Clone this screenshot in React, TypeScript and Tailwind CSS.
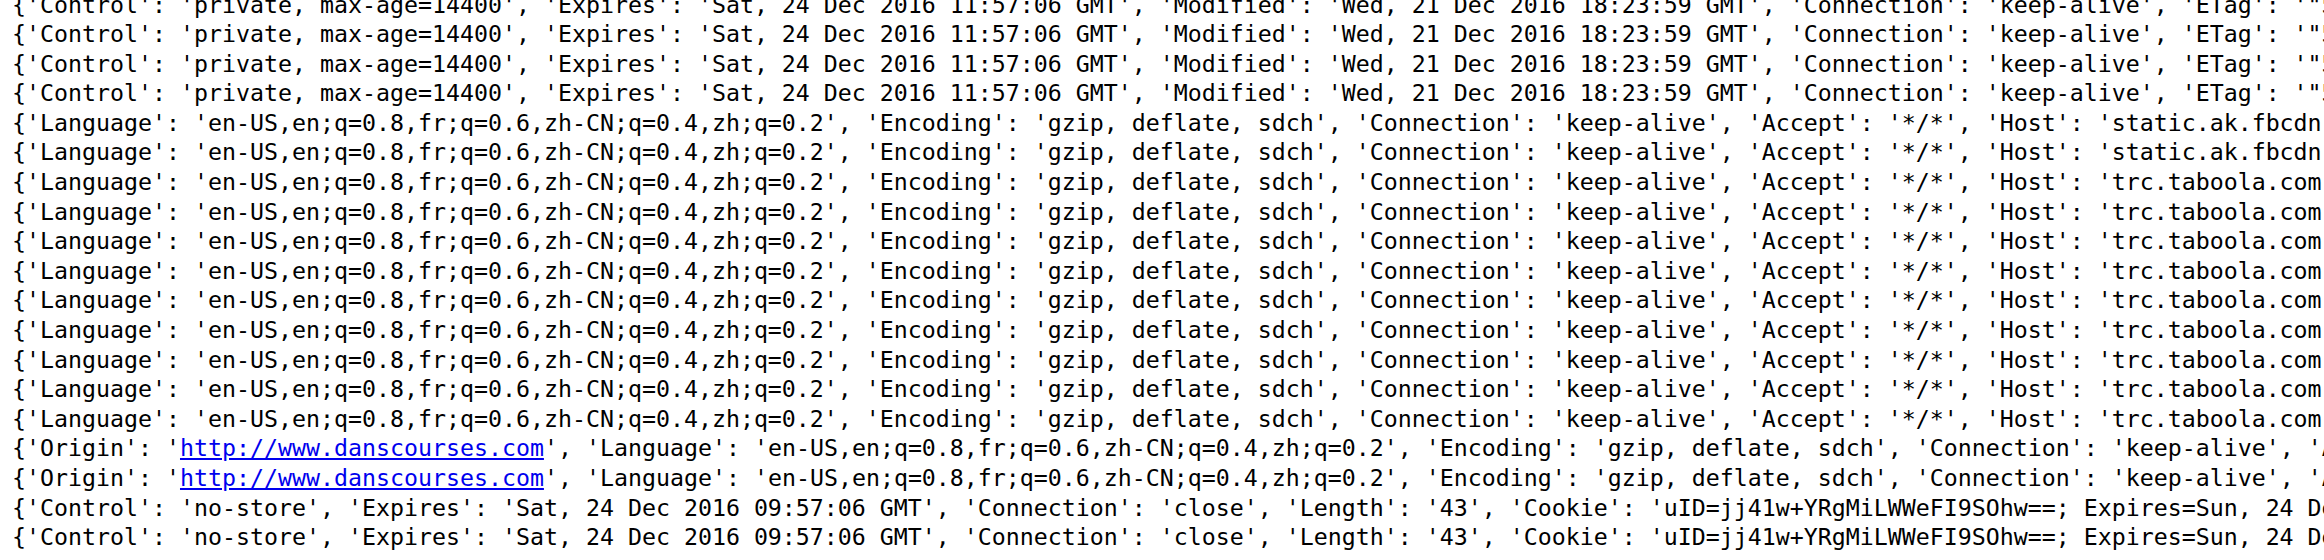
import React from "react";

const control =
  "{'Control': 'private, max-age=14400', 'Expires': 'Sat, 24 Dec 2016 11:57:06 GMT', 'Modified': 'Wed, 21 Dec 2016 18:23:59 GMT', 'Connection': 'keep-alive', 'ETag': '\"585ac8b7-2f4a\"', 'Server': 'nginx'}";
const lang = (host: string) =>
  `{'Language': 'en-US,en;q=0.8,fr;q=0.6,zh-CN;q=0.4,zh;q=0.2', 'Encoding': 'gzip, deflate, sdch', 'Connection': 'keep-alive', 'Accept': '*/*', 'Host': '${host}'}`;
const noStore =
  "{'Control': 'no-store', 'Expires': 'Sat, 24 Dec 2016 09:57:06 GMT', 'Connection': 'close', 'Length': '43', 'Cookie': 'uID=jj41w+YRgMiLWWeFI9SOhw==; Expires=Sun, 24 Dec 2017 11:57:06 GMT; Path=/'}";

type Line = { kind: "plain"; text: string } | { kind: "origin" };

const lines: Line[] = [
  { kind: "plain", text: control },
  { kind: "plain", text: control },
  { kind: "plain", text: control },
  { kind: "plain", text: control },
  { kind: "plain", text: lang("static.ak.fbcdn.net") },
  { kind: "plain", text: lang("static.ak.fbcdn.net") },
  ...Array.from({ length: 9 }, () => ({ kind: "plain" as const, text: lang("trc.taboola.com") })),
  { kind: "origin" },
  { kind: "origin" },
  { kind: "plain", text: noStore },
  { kind: "plain", text: noStore },
];

export default function App() {
  return (
    <div className="w-[2324px] h-[560px] overflow-hidden bg-white">
      <div
        className="flex flex-col mt-[-10.5px] pl-[12px] text-[23.25px] leading-[29.6px] text-black whitespace-pre"
        style={{ fontFamily: "'DejaVu Sans Mono', 'Liberation Mono', monospace" }}
      >
        {lines.map((l, i) =>
          l.kind === "plain" ? (
            <div key={i}>{l.text}</div>
          ) : (
            <div key={i}>
              {"{'Origin': '"}
              <a href="#" className="text-[#0000ee] underline">
                http://www.danscourses.com
              </a>
              {"', 'Language': 'en-US,en;q=0.8,fr;q=0.6,zh-CN;q=0.4,zh;q=0.2', 'Encoding': 'gzip, deflate, sdch', 'Connection': 'keep-alive', 'Accept': '*/*'}"}
            </div>
          )
        )}
      </div>
    </div>
  );
}
